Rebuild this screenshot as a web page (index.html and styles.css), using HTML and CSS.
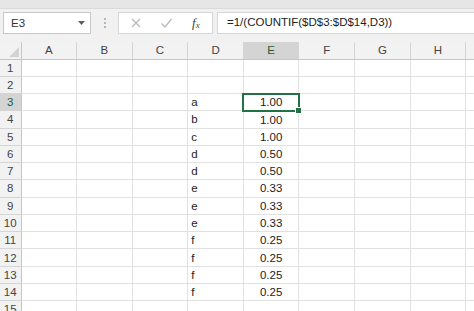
FILE: index.html
```html
<!DOCTYPE html>
<html>
    <head>
        <meta charset="utf-8">
        <link rel="stylesheet" href="styles.css">
    </head>
    <body>
        <div class="top_strip"></div>
        <div class="formula_bar">
            <div class="name_box">
                <span>E3</span>
                <svg class="name_arrow" width="7" height="4" viewBox="0 0 7 4"><path d="M0 0h7L3.5 4z" fill="#5f5f5f"/></svg>
            </div>
            <div class="bar_sep"><i></i><i></i><i></i></div>
            <div class="fx_buttons">
                <svg width="12" height="12" viewBox="0 0 12 12"><path d="M2 2l8 8M10 2l-8 8" stroke="#b9b9b9" stroke-width="1.3" fill="none"/></svg>
                <svg width="13" height="12" viewBox="0 0 13 12"><path d="M1.5 6.5l3.5 3.5L11.5 2" stroke="#b9b9b9" stroke-width="1.3" fill="none"/></svg>
                <span class="fx_label">f<sub>x</sub></span>
            </div>
            <div class="formula_input">=1/(COUNTIF($D$3:$D$14,D3))</div>
        </div>

        <table class="sheet">
            <colgroup>
                <col class="col_rowhead">
                <col><col><col><col><col><col><col><col><col>
            </colgroup>
            <tr class="col_headers">
                <th class="corner"><div class="corner_tri"></div></th>
                <th>A</th><th>B</th><th>C</th><th>D</th><th class="head_active_col">E</th><th>F</th><th>G</th><th>H</th><th></th>
            </tr>
            <tr><th>1</th><td></td><td></td><td></td><td></td><td></td><td></td><td></td><td></td><td></td></tr>
            <tr><th>2</th><td></td><td></td><td></td><td></td><td></td><td></td><td></td><td></td><td></td></tr>
            <tr><th class="head_active_row">3</th><td></td><td></td><td></td><td>a</td><td class="num selected_cell">1.00<div class="fill_handle"></div></td><td></td><td></td><td></td><td></td></tr>
            <tr><th>4</th><td></td><td></td><td></td><td>b</td><td class="num">1.00</td><td></td><td></td><td></td><td></td></tr>
            <tr><th>5</th><td></td><td></td><td></td><td>c</td><td class="num">1.00</td><td></td><td></td><td></td><td></td></tr>
            <tr><th>6</th><td></td><td></td><td></td><td>d</td><td class="num">0.50</td><td></td><td></td><td></td><td></td></tr>
            <tr><th>7</th><td></td><td></td><td></td><td>d</td><td class="num">0.50</td><td></td><td></td><td></td><td></td></tr>
            <tr><th>8</th><td></td><td></td><td></td><td>e</td><td class="num">0.33</td><td></td><td></td><td></td><td></td></tr>
            <tr><th>9</th><td></td><td></td><td></td><td>e</td><td class="num">0.33</td><td></td><td></td><td></td><td></td></tr>
            <tr><th>10</th><td></td><td></td><td></td><td>e</td><td class="num">0.33</td><td></td><td></td><td></td><td></td></tr>
            <tr><th>11</th><td></td><td></td><td></td><td>f</td><td class="num">0.25</td><td></td><td></td><td></td><td></td></tr>
            <tr><th>12</th><td></td><td></td><td></td><td>f</td><td class="num">0.25</td><td></td><td></td><td></td><td></td></tr>
            <tr><th>13</th><td></td><td></td><td></td><td>f</td><td class="num">0.25</td><td></td><td></td><td></td><td></td></tr>
            <tr><th>14</th><td></td><td></td><td></td><td>f</td><td class="num">0.25</td><td></td><td></td><td></td><td></td></tr>
            <tr><th>15</th><td></td><td></td><td></td><td></td><td></td><td></td><td></td><td></td><td></td></tr>
        </table>
    </body>
</html>
```

FILE: styles.css
```css
html, body
{
    margin: 0;
    width: 474px;
    height: 311px;
    overflow: hidden;
    background: #ffffff;
    font-family: "Liberation Sans", Arial, sans-serif;
    color: #222222;
}
.top_strip
{
    height: 8px;
    background: #e6e6e6;
    border-bottom: 1px solid #dadada;
}
.formula_bar
{
    display: flex;
    align-items: flex-start;
    height: 30px;
    padding: 3px 0 0 3px;
    background: #f1f1f1;
    white-space: nowrap;
}
.name_box
{
    display: flex;
    align-items: center;
    justify-content: space-between;
    box-sizing: border-box;
    width: 88px;
    height: 22px;
    padding: 0 5px 0 7px;
    background: #ffffff;
    border: 1px solid #c9c9c9;
    font-size: 11.5px;
    color: #333333;
}
.bar_sep
{
    display: flex;
    flex-direction: column;
    align-items: center;
    gap: 2px;
    width: 27px;
    padding-top: 6px;
}
.bar_sep i
{
    display: block;
    width: 2px;
    height: 2px;
    background: #b5b5b5;
}
.fx_buttons
{
    display: flex;
    align-items: center;
    box-sizing: border-box;
    width: 95px;
    height: 22px;
    padding-left: 11px;
    gap: 18px;
    background: #ffffff;
    border: 1px solid #d6d6d6;
}
.fx_label
{
    font-family: "Liberation Serif", serif;
    font-style: italic;
    font-size: 13px;
    color: #444444;
    margin-left: 1px;
}
.fx_label sub
{
    font-size: 9px;
    vertical-align: -1px;
}
.formula_input
{
    flex: 1;
    box-sizing: border-box;
    height: 22px;
    margin-left: 4px;
    padding: 3px 0 0 9px;
    background: #ffffff;
    border: 1px solid #d6d6d6;
    border-right: none;
    font-size: 11.5px;
    color: #222222;
}

/* the grid */
.sheet
{
    border-collapse: collapse;
    table-layout: fixed;
    width: 521px;
    font-size: 11.5px;
}
.sheet col
{
    width: 55.6px;
}
.sheet col.col_rowhead
{
    width: 21px;
}
.sheet tr
{
    height: 17.27px;
}
.sheet tr.col_headers
{
    height: 17px;
}
.sheet td
{
    padding: 0 3px;
    border: 1px solid #e1e1e1;
    line-height: 14px;
    white-space: nowrap;
    overflow: visible;
}
.sheet th
{
    padding: 0;
    background: #f2f2f2;
    border: 1px solid #d5d5d5;
    font-weight: normal;
    color: #444444;
    line-height: 14px;
    text-align: center;
}
.sheet tr.col_headers th
{
    border-top: none;
    border-bottom: 1px solid #c6c6c6;
}
.sheet tr th:first-child
{
    border-left: none;
    border-right: 1px solid #c6c6c6;
}
.sheet .corner
{
    position: relative;
}
.corner_tri
{
    position: absolute;
    right: 2px;
    bottom: 2px;
    width: 0;
    height: 0;
    border-left: 10px solid transparent;
    border-bottom: 10px solid #d3d3d3;
}
.sheet th.head_active_col
{
    background: #d4d4d4;
    color: #1d5f3a;
    border-bottom: 2px solid #217346;
}
.sheet th.head_active_row
{
    background: #d4d4d4;
    color: #1d5f3a;
    border-right: 2px solid #217346;
}
.sheet td.num
{
    text-align: center;
}
.sheet td.selected_cell
{
    position: relative;
    border: 2px solid #217346;
}
.fill_handle
{
    position: absolute;
    right: -4px;
    bottom: -4px;
    width: 5px;
    height: 5px;
    background: #217346;
    border: 1px solid #ffffff;
}
```
